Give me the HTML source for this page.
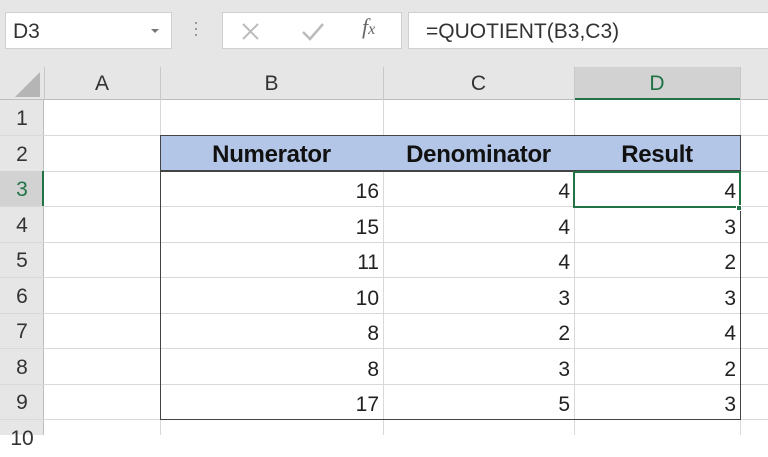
<!DOCTYPE html>
<html><head><style>
*{margin:0;padding:0;box-sizing:border-box}
body{width:768px;height:435px;overflow:hidden;background:#fff;font-family:"Liberation Sans",sans-serif;position:relative}
.a{position:absolute}
.hl{position:absolute;height:1px;background:#d9d9d9}
.vl{position:absolute;width:1px;background:#d9d9d9}
.ch{position:absolute;top:67px;height:33px;text-align:center;line-height:33px;font-size:21px;color:#333}
.rh{position:absolute;left:0;width:44px;text-align:center;font-size:21px;color:#333;height:35.5px;line-height:37px}
.n{position:absolute;text-align:right;font-size:21px;color:#222;height:35.5px;line-height:42px}
.h{position:absolute;top:135px;height:36px;line-height:40px;text-align:center;font-weight:bold;font-size:24px;color:#111;letter-spacing:-0.3px}
</style></head><body>
<div class="a" style="left:0;top:0;width:768px;height:67px;background:#e6e6e6"></div>
<div class="a" style="left:5px;top:12px;width:167px;height:37px;background:#fff;border:1px solid #d0d0d0"></div>
<div class="a" style="left:13px;top:12px;line-height:39px;font-size:21px;color:#333">D3</div>
<div class="a" style="left:151px;top:29px;border-left:4px solid transparent;border-right:4px solid transparent;border-top:4px solid #777"></div>
<div class="a" style="left:195px;top:22px;width:2px;height:2px;background:#999;box-shadow:0 6px #999,0 12px #999"></div>
<div class="a" style="left:222px;top:12px;width:180px;height:37px;background:#fff;border:1px solid #d0d0d0"></div>
<svg class="a" style="left:240px;top:20px" width="110" height="22"><path d="M3 4L18 19M18 4L3 19" stroke="#bbb" stroke-width="2"/><path d="M63 12L70 19L83 4" stroke="#bbb" stroke-width="2.5" fill="none"/></svg>
<div class="a" style="left:362px;top:14px;font-family:'Liberation Serif',serif;font-style:italic;font-size:22px;color:#666">f<span style="font-size:16px">x</span></div>
<div class="a" style="left:408px;top:12px;width:362px;height:37px;background:#fff;border:1px solid #d0d0d0"></div>
<div class="a" style="left:426px;top:12px;line-height:40px;font-size:21px;color:#333">=QUOTIENT(B3,C3)</div>
<div class="a" style="left:0;top:67px;width:768px;height:33px;background:#e6e6e6;border-bottom:1px solid #bdbdbd"></div>
<div class="a" style="left:0;top:100px;width:44px;height:335px;background:#e6e6e6;border-right:1px solid #bdbdbd"></div>
<svg class="a" style="left:15px;top:72px" width="27" height="26"><path d="M25 0L25 25L0 25Z" fill="#b5b5b5"/></svg>
<div class="a" style="left:574px;top:67px;width:166px;height:33px;background:#d2d2d2;border-bottom:2px solid #217346"></div>
<div class="vl" style="left:44px;top:67px;height:33px;background:#c8c8c8"></div>
<div class="vl" style="left:160px;top:67px;height:33px;background:#c8c8c8"></div>
<div class="vl" style="left:383px;top:67px;height:33px;background:#c8c8c8"></div>
<div class="vl" style="left:574px;top:67px;height:33px;background:#c8c8c8"></div>
<div class="vl" style="left:740px;top:67px;height:33px;background:#c8c8c8"></div>
<div class="ch" style="left:44px;width:116px">A</div>
<div class="ch" style="left:160px;width:223px">B</div>
<div class="ch" style="left:383px;width:191px">C</div>
<div class="ch" style="left:574px;width:166px;color:#217346">D</div>
<div class="vl" style="left:160px;top:100px;height:335px"></div>
<div class="vl" style="left:383px;top:100px;height:335px"></div>
<div class="vl" style="left:574px;top:100px;height:335px"></div>
<div class="vl" style="left:740px;top:100px;height:335px"></div>
<div class="hl" style="left:0;top:135px;width:768px"></div>
<div class="hl" style="left:0;top:171px;width:768px"></div>
<div class="hl" style="left:0;top:206px;width:768px"></div>
<div class="hl" style="left:0;top:242px;width:768px"></div>
<div class="hl" style="left:0;top:277px;width:768px"></div>
<div class="hl" style="left:0;top:313px;width:768px"></div>
<div class="hl" style="left:0;top:348px;width:768px"></div>
<div class="hl" style="left:0;top:384px;width:768px"></div>
<div class="hl" style="left:0;top:419px;width:768px"></div>
<div class="a" style="left:0;top:171px;width:44px;height:35px;background:#d2d2d2;border-right:2px solid #217346"></div>
<div class="rh" style="top:100px">1</div>
<div class="rh" style="top:135.5px">2</div>
<div class="rh" style="top:171px;color:#217346">3</div>
<div class="rh" style="top:206.5px">4</div>
<div class="rh" style="top:242px">5</div>
<div class="rh" style="top:277.5px">6</div>
<div class="rh" style="top:313px">7</div>
<div class="rh" style="top:348.5px">8</div>
<div class="rh" style="top:384px">9</div>
<div class="rh" style="top:419.5px">10</div>
<div class="a" style="left:160px;top:135px;width:581px;height:36px;background:#b4c6e7"></div>
<div class="a" style="left:160px;top:135px;width:581px;height:285px;border:1px solid #444"></div>
<div class="a" style="left:160px;top:170px;width:581px;height:2px;background:#444"></div>
<div class="h" style="left:160px;width:223px">Numerator</div>
<div class="h" style="left:383px;width:191px">Denominator</div>
<div class="h" style="left:574px;width:166px">Result</div>
<div class="a" style="left:573px;top:171px;width:168px;height:37px;border:2px solid #217346"></div>
<div class="a" style="left:736px;top:205px;width:6px;height:6px;background:#217346;border:1px solid #fff"></div>
<div class="n" style="top:171px;left:160px;width:219px">16</div><div class="n" style="top:171px;left:383px;width:187px">4</div><div class="n" style="top:171px;left:574px;width:162px">4</div>
<div class="n" style="top:206.5px;left:160px;width:219px">15</div><div class="n" style="top:206.5px;left:383px;width:187px">4</div><div class="n" style="top:206.5px;left:574px;width:162px">3</div>
<div class="n" style="top:242px;left:160px;width:219px">11</div><div class="n" style="top:242px;left:383px;width:187px">4</div><div class="n" style="top:242px;left:574px;width:162px">2</div>
<div class="n" style="top:277.5px;left:160px;width:219px">10</div><div class="n" style="top:277.5px;left:383px;width:187px">3</div><div class="n" style="top:277.5px;left:574px;width:162px">3</div>
<div class="n" style="top:313px;left:160px;width:219px">8</div><div class="n" style="top:313px;left:383px;width:187px">2</div><div class="n" style="top:313px;left:574px;width:162px">4</div>
<div class="n" style="top:348.5px;left:160px;width:219px">8</div><div class="n" style="top:348.5px;left:383px;width:187px">3</div><div class="n" style="top:348.5px;left:574px;width:162px">2</div>
<div class="n" style="top:384px;left:160px;width:219px">17</div><div class="n" style="top:384px;left:383px;width:187px">5</div><div class="n" style="top:384px;left:574px;width:162px">3</div>
</body></html>
